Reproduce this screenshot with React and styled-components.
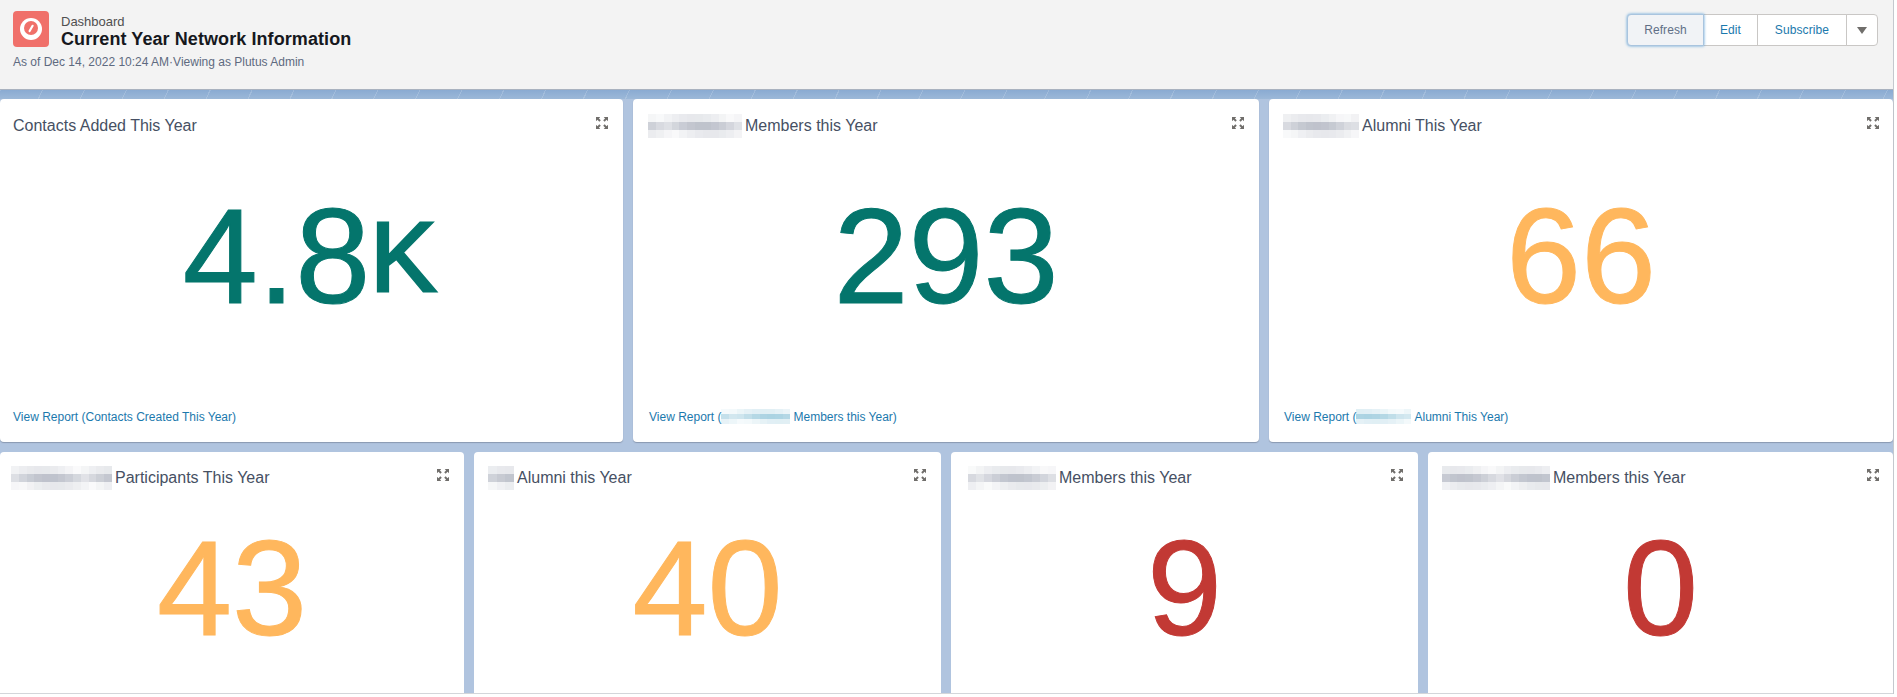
import React from 'react';
import styled, { createGlobalStyle } from 'styled-components';

const GlobalStyle = createGlobalStyle`
  html, body {
    margin: 0;
    padding: 0;
    height: 100%;
    overflow: hidden;
    background: #fff;
    font-family: "Liberation Sans", Arial, sans-serif;
  }
`;

const Page = styled.div`
  width: 1897px;
  height: 697px;
  display: flex;
  flex-direction: column;
  overflow: hidden;
  box-sizing: border-box;
  padding: 0 3px 3px 0;
  background: #fff;
`;

const Shell = styled.div`
  flex: 1;
  min-height: 0;
  display: flex;
  flex-direction: column;
  border-right: 1px solid #c4c8ce;
`;

const Header = styled.header`
  height: 90px;
  flex: none;
  box-sizing: border-box;
  padding: 15px 15px 0 13px;
  display: flex;
  justify-content: space-between;
  align-items: flex-start;
  background: #f3f3f3;
  border-bottom: 1px solid #a9b2bf;
`;

const TitleBlock = styled.div`
  display: flex;
  flex-direction: column;
  margin-top: -4px;
`;

const TitleRow = styled.div`
  display: flex;
  gap: 12px;
  align-items: flex-start;
`;

const IconTile = styled.div`
  width: 36px;
  height: 36px;
  border-radius: 4px;
  background: #f0706a;
  display: flex;
  align-items: center;
  justify-content: center;
`;

const TitleText = styled.div`
  padding-top: 3px;
`;

const Eyebrow = styled.div`
  font-size: 13px;
  line-height: 15px;
  color: #4f4f4f;
`;

const Title = styled.h1`
  margin: 0;
  font-size: 18px;
  line-height: 21px;
  font-weight: 700;
  letter-spacing: 0.08px;
  color: #16181d;
`;

const Meta = styled.div`
  margin-top: 5px;
  font-size: 12px;
  line-height: 14px;
  color: #5e6a80;
`;

const ButtonGroup = styled.div`
  display: flex;
  margin-top: -1px;
`;

const GroupButton = styled.button`
  width: ${p => p.$w}px;
  height: 32px;
  box-sizing: border-box;
  padding: 0;
  margin-left: -1px;
  display: flex;
  align-items: center;
  justify-content: center;
  font: 12px "Liberation Sans", Arial, sans-serif;
  letter-spacing: 0.1px;
  color: ${p => (p.$focused ? '#5f6f86' : '#1b79ad')};
  background: ${p => (p.$focused ? '#f1f3f6' : '#fff')};
  border: 1px solid #c9c7c5;
  border-radius: ${p => (p.$last ? '0 4px 4px 0' : '0')};
  ${p => p.$focused && `
    position: relative;
    margin-left: 0;
    border-radius: 4px 0 0 4px;
    border-color: #a9c4de;
    box-shadow: 0 0 3px #5a9fd6;
  `}
`;

const Board = styled.main`
  flex: 1;
  min-height: 0;
  display: flex;
  flex-direction: column;
  gap: 10px;
  padding-top: 9px;
  background-color: #b0c4df;
  background-image:
    repeating-linear-gradient(115deg, rgba(255, 255, 255, 0.16) 0 1px, transparent 1px 38px),
    linear-gradient(#8aabd2, #9cb8d8);
  background-size: 100% 9px;
  background-repeat: no-repeat;
  border-bottom: 1px solid #d3d6da;
  box-sizing: border-box;
`;

const CardRow = styled.div`
  display: grid;
  grid-template-columns: ${p => p.$columns};
  gap: 10px;
  flex: ${p => p.$grow};
  min-height: 0;
`;

const Card = styled.section`
  position: relative;
  background: #fff;
  border-radius: ${p => (p.$flush ? '4px 4px 0 0' : '4px')};
  box-shadow: ${p => (p.$flush ? 'none' : '0 1px 1px rgba(90, 100, 120, 0.45)')};
  display: flex;
  flex-direction: column;
  overflow: hidden;
  min-width: 0;
`;

const CardHead = styled.div`
  display: flex;
  justify-content: space-between;
  padding: ${p => (p.$flush ? 17 : 18)}px 15px 0 ${p => p.$inset}px;
  height: 42px;
  box-sizing: border-box;
  flex: none;

  section:last-child > & {
    padding-right: 14px;
  }
`;

const CardTitle = styled.h2`
  margin: 0;
  display: flex;
  align-items: center;
  height: 18px;
  font-size: 16px;
  font-weight: 400;
  color: #465063;
  white-space: nowrap;
`;

const Mosaic = styled.span`
  display: inline-grid;
  grid-template-columns: repeat(${p => p.$cols}, 1fr);
  grid-auto-rows: ${p => p.$cell}px;
  width: ${p => p.$w}px;
  margin-right: 3px;
  flex: none;
  vertical-align: middle;
  filter: blur(0.3px);
`;

const MosaicCell = styled.i`
  display: block;
  background: ${p => p.$tone};
`;

// pixelated name that was blurred out of the screenshot
const Blur = ({ w, tone, cell = 8, rows = 3 }) => {
  const cols = Math.max(2, Math.round(w / 8));
  const cells = [];
  for (let r = 0; r < rows; r++) {
    for (let c = 0; c < cols; c++) {
      const noise = Math.abs(Math.sin(c * 12.9 + r * 78.2 + w)) % 1;
      const middle = r === Math.floor(rows / 2);
      cells.push(middle ? 0.35 + noise * 0.4 : 0.06 + noise * 0.22);
    }
  }
  return (
    <Mosaic $cols={cols} $w={w} $cell={cell}>
      {cells.map((alpha, i) => (
        <MosaicCell key={i} $tone={tone} style={{ opacity: alpha }} />
      ))}
    </Mosaic>
  );
};

const Metric = styled.div`
  flex: 1;
  min-height: 0;
  display: flex;
  align-items: center;
  justify-content: center;
  padding-bottom: ${p => p.$lift}px;
  font-size: 135px;
  line-height: 1;
  color: ${p => p.$color};
  -webkit-text-stroke: 1px ${p => p.$color};
  white-space: nowrap;
`;

const Suffix = styled.span`
  font-size: 99px;
  margin-right: 4px;
  -webkit-text-stroke: 3px currentColor;
`;

const ReportLink = styled.a`
  flex: none;
  display: flex;
  align-items: center;
  height: 45px;
  padding-left: ${p => p.$inset}px;
  padding-bottom: 6px;
  box-sizing: border-box;
  font-size: 12px;
  color: #1b79ad;
  text-decoration: none;
  white-space: nowrap;
`;

const GaugeIcon = () => (
  <svg width="26" height="26" viewBox="0 0 26 26">
    <circle cx="13" cy="13" r="11" fill="#fff" />
    <circle cx="13" cy="12" r="7" fill="#f0706a" />
    <path d="M11.6 15 L14.6 9.8" stroke="#fff" strokeWidth="2.2" strokeLinecap="round" />
  </svg>
);

const ExpandIcon = () => (
  <svg width="12" height="12" viewBox="0 0 13 13" fill="#706e6b">
    <path d="M0 0h4.6L3.2 1.5 5.2 3.5 3.6 5.2 1.6 3.1 0 4.6z" />
    <path d="M13 0H8.4l1.4 1.5-2 2 1.6 1.7 2-2.1L13 4.6z" />
    <path d="M0 13h4.6l-1.4-1.5 2-2-1.6-1.7-2 2.1L0 8.4z" />
    <path d="M13 13H8.4l1.4-1.5-2-2 1.6-1.7 2 2.1L13 8.4z" />
  </svg>
);

const Caret = styled.span`
  display: block;
  width: 0;
  height: 0;
  border-left: 5px solid transparent;
  border-right: 5px solid transparent;
  border-top: 7px solid #706e6b;
`;

const Tile = ({ blur, title, value, suffix, color, link, linkBlur, linkRest, lift, inset, flush }) => (
  <Card $flush={flush}>
    <CardHead $inset={inset} $flush={flush}>
      <CardTitle>
        {blur && <Blur w={blur} tone="#a9aebb" />}
        {title}
      </CardTitle>
      <ExpandIcon />
    </CardHead>
    <Metric $color={color} $lift={lift}>
      {value}
      {suffix && <Suffix>{suffix}</Suffix>}
    </Metric>
    {(link || linkBlur) && (
      <ReportLink $inset={linkBlur ? inset + 1 : inset} href="#">
        {link}
        {linkBlur && <Blur w={linkBlur} tone="#8fc4d8" cell={5} />}
        {linkRest}
      </ReportLink>
    )}
  </Card>
);

const GREEN = '#04756c';
const AMBER = '#ffb75d';
const RED = '#c23934';

export default function App() {
  return (
    <>
      <GlobalStyle />
      <Page>
        <Shell>
          <Header>
            <TitleBlock>
              <TitleRow>
                <IconTile><GaugeIcon /></IconTile>
                <TitleText>
                  <Eyebrow>Dashboard</Eyebrow>
                  <Title>Current Year Network Information</Title>
                </TitleText>
              </TitleRow>
              <Meta>As of Dec 14, 2022 10:24 AM·Viewing as Plutus Admin</Meta>
            </TitleBlock>
            <ButtonGroup>
              <GroupButton $focused $w={77}>Refresh</GroupButton>
              <GroupButton $w={55}>Edit</GroupButton>
              <GroupButton $w={90}>Subscribe</GroupButton>
              <GroupButton $last $w={32} aria-label="More"><Caret /></GroupButton>
            </ButtonGroup>
          </Header>
          <Board>
            <CardRow $columns="623px 626px 1fr" $grow="0 0 343px">
              <Tile inset={13} lift={26} title="Contacts Added This Year" value="4.8" suffix="K" color={GREEN}
                link="View Report (Contacts Created This Year)" />
              <Tile inset={15} lift={26} blur={94} title="Members this Year" value="293" color={GREEN}
                link="View Report (" linkBlur={69} linkRest="Members this Year)" />
              <Tile inset={14} lift={26} blur={76} title="Alumni This Year" value="66" color={AMBER}
                link="View Report (" linkBlur={55} linkRest="Alumni This Year)" />
            </CardRow>
            <CardRow $columns="464px 467px 467px 1fr" $grow="1">
              <Tile flush inset={11} lift={11} blur={101} title="Participants This Year" value="43" color={AMBER} />
              <Tile flush inset={14} lift={11} blur={26} title="Alumni this Year" value="40" color={AMBER} />
              <Tile flush inset={17} lift={11} blur={88} title="Members this Year" value="9" color={RED} />
              <Tile flush inset={14} lift={11} blur={108} title="Members this Year" value="0" color={RED} />
            </CardRow>
          </Board>
        </Shell>
      </Page>
    </>
  );
}
